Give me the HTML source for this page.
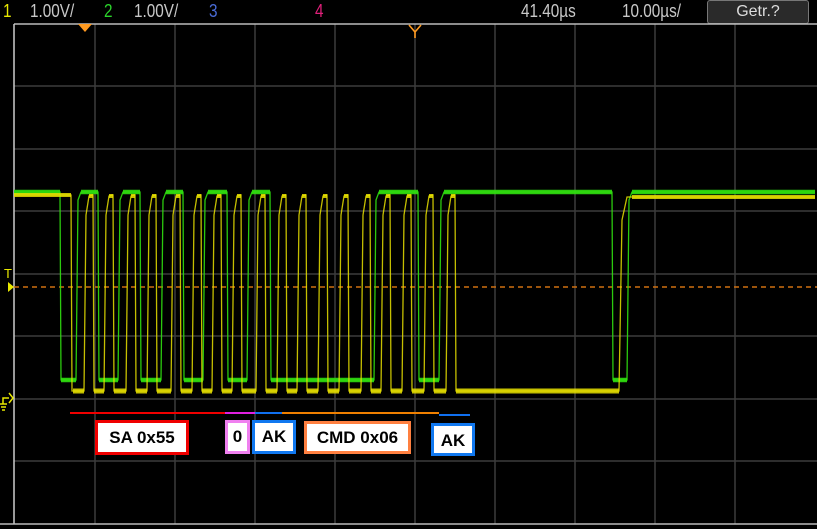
<!DOCTYPE html>
<html><head><meta charset="utf-8"><style>
body{margin:0;width:817px;height:529px;background:#000;overflow:hidden;font-family:"Liberation Sans",sans-serif}
.t{position:absolute;top:1px;font-size:18px;color:#c8c8c8;transform:scaleX(.85);transform-origin:left;letter-spacing:0}
.lbl{position:absolute;background:#fff;font-weight:bold;font-size:17px;color:#000;box-sizing:border-box;border:3px solid;text-align:center;line-height:28px}
</style></head><body>
<div class="t" style="left:3px;color:#e8e800">1</div>
<div class="t" style="left:30px">1.00V/</div>
<div class="t" style="left:104px;color:#2bd52b">2</div>
<div class="t" style="left:134px">1.00V/</div>
<div class="t" style="left:209px;color:#4a6cd8">3</div>
<div class="t" style="left:315px;color:#e0207a">4</div>
<div class="t" style="left:521px">41.40µs</div>
<div class="t" style="left:622px">10.00µs/</div>
<div style="position:absolute;left:707px;top:0;width:100px;height:22px;background:#2a2a2a;border:1px solid #777;border-radius:3px;color:#ddd;font-size:16px;text-align:center;line-height:22px">Getr.?</div>
<svg width="817" height="529" style="position:absolute;left:0;top:0">
<g stroke="#3c3c3c" stroke-width="1.5">
<line x1="95" y1="24" x2="95" y2="524"/><line x1="175" y1="24" x2="175" y2="524"/><line x1="255" y1="24" x2="255" y2="524"/><line x1="335" y1="24" x2="335" y2="524"/><line x1="415" y1="24" x2="415" y2="524"/><line x1="495" y1="24" x2="495" y2="524"/><line x1="575" y1="24" x2="575" y2="524"/><line x1="655" y1="24" x2="655" y2="524"/><line x1="735" y1="24" x2="735" y2="524"/>
<line x1="14" y1="86" x2="817" y2="86"/><line x1="14" y1="149" x2="817" y2="149"/><line x1="14" y1="211" x2="817" y2="211"/><line x1="14" y1="274" x2="817" y2="274"/><line x1="14" y1="336" x2="817" y2="336"/><line x1="14" y1="399" x2="817" y2="399"/><line x1="14" y1="461" x2="817" y2="461"/>
</g>
<line x1="14" y1="24" x2="817" y2="24" stroke="#bbb" stroke-width="1.5"/>
<line x1="14" y1="24" x2="14" y2="524" stroke="#ccc" stroke-width="1.5"/>
<line x1="0" y1="524" x2="817" y2="524" stroke="#bbb" stroke-width="1.5"/>
<line x1="14" y1="287" x2="817" y2="287" stroke="#d07010" stroke-width="1.5" stroke-dasharray="5,4"/>
<polygon points="78,24 92,24 85,32" fill="#ff9a20"/>
<path d="M409,25 L415,32 L421,25 M415,32 V38" stroke="#ff9a20" stroke-width="1.6" fill="none"/>
<text x="4" y="278" fill="#e8e800" font-size="13" font-family="Liberation Sans">T</text>
<polygon points="8,282 14,287 8,292" fill="#e8e800"/>
<path d="M3,404 V398 H9 M9,393 L13,398 L9,403 M0,404 H7 M1,407 H6 M2,410 H5" stroke="#e8e800" stroke-width="1.5" fill="none"/>
<g stroke="#30e010" fill="none" stroke-opacity=".9">
<path d="M14,192 L60,192 L61,380 L76,380 L78,200 L81,192 L98,192 L99,380 L118,380 L120,200 L123,192 L140,192 L141,380 L161,380 L163,200 L166,192 L183,192 L184,380 L203,380 L205,200 L208,192 L227,192 L228,380 L247,380 L249,200 L252,192 L270,192 L271,380 L374,380 L376,200 L379,192 L418,192 L419,380 L439,380 L441,200 L444,192 L612,192 L613,380 L627,380 L629,200 L632,192 L815,192" stroke-width="1.3"/>
<path d="M14,192H60M81,192H98M123,192H140M166,192H183M208,192H227M252,192H270M379,192H418M444,192H612M632,192H815M61,380H76M99,380H118M141,380H161M184,380H203M228,380H247M271,380H374M419,380H439M613,380H627" stroke-width="4.5"/>
</g>
<g stroke="#e8e000" fill="none" stroke-opacity=".85">
<path d="M14,195 L71,195 L72,391 L84,391 L86,215 L89,196 L93,195 L94,391 L104,391 L106,215 L109,196 L113,195 L114,391 L126,391 L128,215 L131,196 L135,195 L136,391 L147,391 L149,215 L152,196 L156,195 L157,391 L171,391 L173,215 L176,196 L180,195 L181,391 L192,391 L194,215 L197,196 L201,195 L202,391 L212,391 L214,215 L217,196 L221,195 L222,391 L232,391 L234,215 L237,196 L241,195 L242,391 L256,391 L258,215 L261,196 L265,195 L266,391 L277,391 L279,215 L282,196 L286,195 L287,391 L297,391 L299,215 L302,196 L306,195 L307,391 L318,391 L320,215 L323,196 L327,195 L328,391 L339,391 L341,215 L344,196 L348,195 L349,391 L361,391 L363,215 L366,196 L370,195 L371,391 L381,391 L383,215 L386,196 L390,195 L391,391 L402,391 L404,215 L407,196 L411,195 L412,391 L424,391 L426,215 L429,196 L433,195 L434,391 L446,391 L448,215 L451,196 L455,195 L456,391 L619,391 L622,220 L627,197 L632,197 L815,197" stroke-width="1.3"/>
<path d="M14,195H71M632,197H815M89,196H93M109,196H113M131,196H135M152,196H156M176,196H180M197,196H201M217,196H221M237,196H241M261,196H265M282,196H286M302,196H306M323,196H327M344,196H348M366,196H370M386,196H390M407,196H411M429,196H433M451,196H455" stroke-width="4"/>
<path d="M73,391H84M94,391H104M114,391H126M136,391H147M157,391H171M181,391H192M202,391H212M222,391H232M242,391H256M266,391H277M287,391H297M307,391H318M328,391H339M349,391H361M371,391H381M391,391H402M412,391H424M434,391H446M456,391H619" stroke-width="5"/>
</g>
<line x1="70" y1="413" x2="225" y2="413" stroke="#f00000" stroke-width="2"/>
<line x1="225" y1="413" x2="255" y2="413" stroke="#e020e0" stroke-width="2"/>
<line x1="255" y1="413" x2="282" y2="413" stroke="#1070f0" stroke-width="2"/>
<line x1="282" y1="413" x2="439" y2="413" stroke="#f08000" stroke-width="2"/>
<line x1="439" y1="415" x2="470" y2="415" stroke="#1070f0" stroke-width="2"/>
</svg>
<div class="lbl" style="left:95px;top:420px;width:94px;height:35px;border-color:#f00000;line-height:29px">SA 0x55</div>
<div class="lbl" style="left:225px;top:420px;width:25px;height:34px;border-color:#f080f0;line-height:28px">0</div>
<div class="lbl" style="left:252px;top:420px;width:44px;height:34px;border-color:#1078f0;line-height:28px">AK</div>
<div class="lbl" style="left:304px;top:421px;width:107px;height:33px;border-color:#ff8040;line-height:27px">CMD 0x06</div>
<div class="lbl" style="left:431px;top:423px;width:44px;height:33px;border-color:#1078f0;line-height:29px">AK</div>
</body></html>
